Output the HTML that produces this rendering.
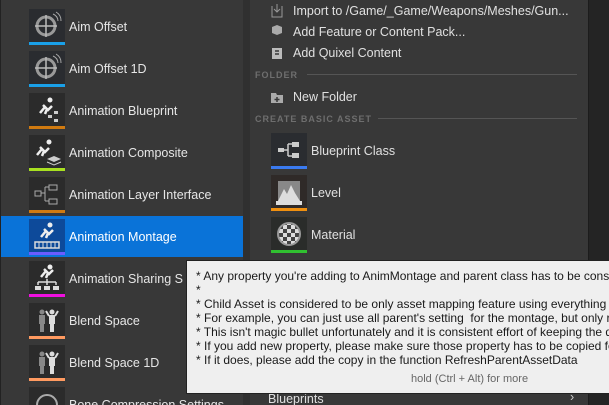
<!DOCTYPE html><html style="overflow:hidden"><head><style>
*{margin:0;padding:0;box-sizing:border-box}
html,body{width:609px;height:405px;overflow:hidden}
body{background:#383838;font-family:"Liberation Sans",sans-serif;color:#e0e0e0;position:relative}
.abs{position:absolute}
.row{position:absolute;left:1px;width:242px;height:42px;overflow:hidden}
.ic{position:absolute;left:28px;top:3px;width:36px;height:36px;background:#2b2b2b}
.ic i{position:absolute;left:0;right:0;bottom:0;height:3px}
.lbl{position:absolute;left:68px;top:14px;font-size:12.5px;color:#e6e6e6;white-space:nowrap}
.r{position:absolute;font-size:12.5px;color:#e0e0e0;white-space:nowrap}
.hdr{position:absolute;font-size:9px;font-weight:bold;letter-spacing:1px;color:#6e6e6e}
.line{position:absolute;height:1px;background:#555}
.tip{position:absolute;left:186px;top:260px;width:423px;height:134px;overflow:hidden;background:#efefef;border:1px solid #222;border-right:none;color:#1a1a1a;font-size:12px;line-height:14px;padding:8px 0 0 9px;white-space:nowrap}
</style></head><body>
<div class="abs" style="left:0;top:0;width:1px;height:405px;background:#222"></div>
<div class="abs" style="left:243px;top:0;width:7px;height:405px;background:#303030"></div>
<div class="abs" style="left:589px;top:0;width:20px;height:405px;background:#242424"></div>
<div class="abs" style="left:588px;top:0;width:1px;height:405px;background:#1c1c1c"></div>

<div class="row" style="top:6px"><div class="ic" style="background:#2a2c30"><svg width="36" height="33"><circle cx="17" cy="17" r="9" fill="none" stroke="#999" stroke-width="3"/><path d="M17 6v22M6 17h22" stroke="#bbb" stroke-width="1.5"/><path d="M24 5a8 8 0 0 1 5 7M27 3a10 10 0 0 1 5 9" stroke="#aaa" fill="none"/></svg><i style="background:#1aa0e8"></i></div><div class="lbl">Aim Offset</div></div>
<div class="row" style="top:48px"><div class="ic" style="background:#2a2c30"><svg width="36" height="33"><circle cx="17" cy="17" r="9" fill="none" stroke="#999" stroke-width="3"/><path d="M17 6v22M6 17h22" stroke="#bbb" stroke-width="1.5"/><path d="M24 5a8 8 0 0 1 5 7M27 3a10 10 0 0 1 5 9" stroke="#aaa" fill="none"/></svg><i style="background:#1aa0e8"></i></div><div class="lbl">Aim Offset 1D</div></div>
<div class="row" style="top:90px"><div class="ic"><svg width="36" height="33"><circle cx="21" cy="7" r="2.5" fill="#eee"/><path d="M11 20l5-6 3 3 4-4M16 14l-2-2M18 16l-2 5" stroke="#eee" stroke-width="2.5" fill="none"/><rect x="19" y="22" width="4" height="3" fill="#ccc"/><rect x="25" y="18" width="4" height="3" fill="#ccc"/><rect x="25" y="26" width="4" height="3" fill="#ccc"/></svg><i style="background:#d07a10"></i></div><div class="lbl">Animation Blueprint</div></div>
<div class="row" style="top:132px"><div class="ic"><svg width="36" height="33"><circle cx="20" cy="7" r="2.5" fill="#eee"/><path d="M8 20l5-6 3 3 4-4M13 14l-2-2M15 16l-2 5" stroke="#eee" stroke-width="2.5" fill="none"/><path d="M18 24l7-3 7 3-7 3z" fill="#ccc"/><path d="M18 27l7 3 7-3" stroke="#ccc" fill="none"/></svg><i style="background:#a8e020"></i></div><div class="lbl">Animation Composite</div></div>
<div class="row" style="top:174px"><div class="ic"><svg width="36" height="33"><rect x="6" y="14" width="6" height="5" fill="none" stroke="#aaa"/><rect x="20" y="8" width="8" height="5" fill="none" stroke="#aaa"/><rect x="20" y="22" width="8" height="5" fill="none" stroke="#aaa"/><path d="M12 16h4M16 10v14M16 10h4M16 24h4" stroke="#aaa"/></svg><i style="background:#d07a10"></i></div><div class="lbl">Animation Layer Interface</div></div>
<div class="row" style="top:216px;height:41px;background:#0a73d8"><div class="ic" style="top:3px;background:#0d4a9a"><svg width="36" height="33"><circle cx="21" cy="6" r="2.5" fill="#eee"/><path d="M12 18l5-6 3 3 4-4M17 12l-2-2M19 14l-2 5" stroke="#eee" stroke-width="2.5" fill="none"/><rect x="6" y="23" width="24" height="6" fill="none" stroke="#ddd" stroke-width="1.5"/><path d="M10 23v6M14 23v6M18 23v6M22 23v6M26 23v6" stroke="#ddd"/></svg><i style="background:#6a5cff"></i></div><div class="lbl" style="color:#fff">Animation Montage</div></div>
<div class="row" style="top:258px"><div class="ic"><svg width="36" height="33"><circle cx="21" cy="6" r="2.5" fill="#eee"/><path d="M12 16l5-6 3 3 4-4M17 10l-2-2M19 12l-2 5" stroke="#eee" stroke-width="2.5" fill="none"/><path d="M18 18v3M9 21h18M9 21v3M18 21v3M27 21v3" stroke="#ddd" stroke-width="1.5"/><rect x="6" y="25" width="6" height="4" fill="#ddd"/><rect x="15" y="25" width="6" height="4" fill="#ddd"/><rect x="24" y="25" width="6" height="4" fill="#ddd"/></svg><i style="background:#f010e0"></i></div><div class="lbl">Animation Sharing S</div></div>
<div class="row" style="top:300px"><div class="ic"><svg width="36" height="33"><circle cx="13" cy="9" r="2.5" fill="#888"/><rect x="10" y="12" width="6" height="9" fill="#888"/><rect x="11" y="21" width="4" height="8" fill="#888"/><circle cx="23" cy="9" r="2.5" fill="#ddd"/><rect x="20" y="12" width="6" height="9" fill="#ddd"/><rect x="21" y="21" width="4" height="8" fill="#ddd"/><path d="M20 13l-3-5M26 13l3-5" stroke="#ddd" stroke-width="2"/></svg><i style="background:#ff9a60"></i></div><div class="lbl">Blend Space</div></div>
<div class="row" style="top:342px"><div class="ic"><svg width="36" height="33"><circle cx="13" cy="9" r="2.5" fill="#888"/><rect x="10" y="12" width="6" height="9" fill="#888"/><rect x="11" y="21" width="4" height="8" fill="#888"/><circle cx="23" cy="9" r="2.5" fill="#ddd"/><rect x="20" y="12" width="6" height="9" fill="#ddd"/><rect x="21" y="21" width="4" height="8" fill="#ddd"/><path d="M20 13l-3-5M26 13l3-5" stroke="#ddd" stroke-width="2"/></svg><i style="background:#ff9a60"></i></div><div class="lbl">Blend Space 1D</div></div>
<div class="row" style="top:384px;height:21px"><div class="ic"><svg width="36" height="33"><circle cx="18" cy="18" r="10" fill="none" stroke="#aaa" stroke-width="2"/></svg></div><div class="lbl">Bone Compression Settings</div></div>

<svg class="abs" style="left:270px;top:3px" width="14" height="60"><path d="M2 3v11h10V3M7 1v8M4 6l3 3 3-3" stroke="#999" fill="none"/><path d="M2 24l5-2 5 2v6l-5 2-5-2z" fill="#aaa"/><rect x="2" y="45" width="10" height="11" fill="#bbb"/><path d="M5 48h4M5 51h4" stroke="#383838" stroke-width="1.5"/></svg>
<div class="r" style="left:293px;top:4px">Import to /Game/_Game/Weapons/Meshes/Gun...</div>
<div class="r" style="left:293px;top:25px">Add Feature or Content Pack...</div>
<div class="r" style="left:293px;top:46px">Add Quixel Content</div>
<div class="hdr" style="left:255px;top:70px">FOLDER</div>
<div class="line" style="left:307px;top:74px;width:270px"></div>
<svg class="abs" style="left:270px;top:91px" width="14" height="14"><path d="M1 2h5l1 2h6v8H1z" fill="#aaa"/><path d="M7 6v5M4.5 8.5h5" stroke="#383838" stroke-width="1.5"/></svg>
<div class="r" style="left:293px;top:90px">New Folder</div>
<div class="hdr" style="left:255px;top:114px">CREATE BASIC ASSET</div>
<div class="line" style="left:378px;top:118px;width:199px"></div>
<div class="abs" style="left:271px;top:133px;width:36px;height:36px;background:#2a2c30"><svg width="36" height="33"><rect x="7" y="15" width="6" height="4" fill="#ccc"/><rect x="21" y="9" width="7" height="5" fill="#ccc"/><rect x="21" y="20" width="7" height="5" fill="#ccc"/><path d="M13 17h4M17 11v12M17 11h4M17 23h4" stroke="#ccc" stroke-width="1.5"/></svg><div class="abs" style="left:0;bottom:0;width:36px;height:3px;background:#3a7af0"></div></div>
<div class="r" style="left:311px;top:144px">Blueprint Class</div>
<div class="abs" style="left:271px;top:175px;width:36px;height:36px;background:#2f2a28"><svg width="36" height="33"><rect x="7" y="6" width="22" height="20" fill="#888"/><path d="M7 26l6-12 3 5 4-9 4 8 5 8z" fill="#ddd"/><rect x="5" y="26" width="26" height="4" fill="#ddd"/></svg><div class="abs" style="left:0;bottom:0;width:36px;height:3px;background:#f09010"></div></div>
<div class="r" style="left:311px;top:186px">Level</div>
<div class="abs" style="left:271px;top:217px;width:36px;height:36px;background:#2a2c2a"><svg width="36" height="33"><defs><pattern id="ck" width="8" height="8" patternUnits="userSpaceOnUse"><rect width="8" height="8" fill="#ddd"/><rect width="4" height="4" fill="#444"/><rect x="4" y="4" width="4" height="4" fill="#444"/></pattern></defs><circle cx="18" cy="17" r="11" fill="url(#ck)" stroke="#999" stroke-width="2"/></svg><div class="abs" style="left:0;bottom:0;width:36px;height:3px;background:#30c030"></div></div>
<div class="r" style="left:311px;top:228px">Material</div>
<div class="r" style="left:268px;top:392px;height:13px;overflow:hidden">Blueprints</div>
<div class="r" style="left:570px;top:390px;height:15px;overflow:hidden;color:#ccc">›</div>

<div class="tip">* Any property you're adding to AnimMontage and parent class has to be considered for Child Asset<br>*<br>* Child Asset is considered to be only asset mapping feature using everything else in the class<br>* For example, you can just use all parent's setting&nbsp; for the montage, but only replace asset<br>* This isn't magic bullet unfortunately and it is consistent effort of keeping the data<br>* If you add new property, please make sure those property has to be copied for children.<br>* If it does, please add the copy in the function RefreshParentAssetData<div style="margin-left:215px;margin-top:5px;color:#666;font-size:11px">hold (Ctrl + Alt) for more</div></div>
</body></html>
